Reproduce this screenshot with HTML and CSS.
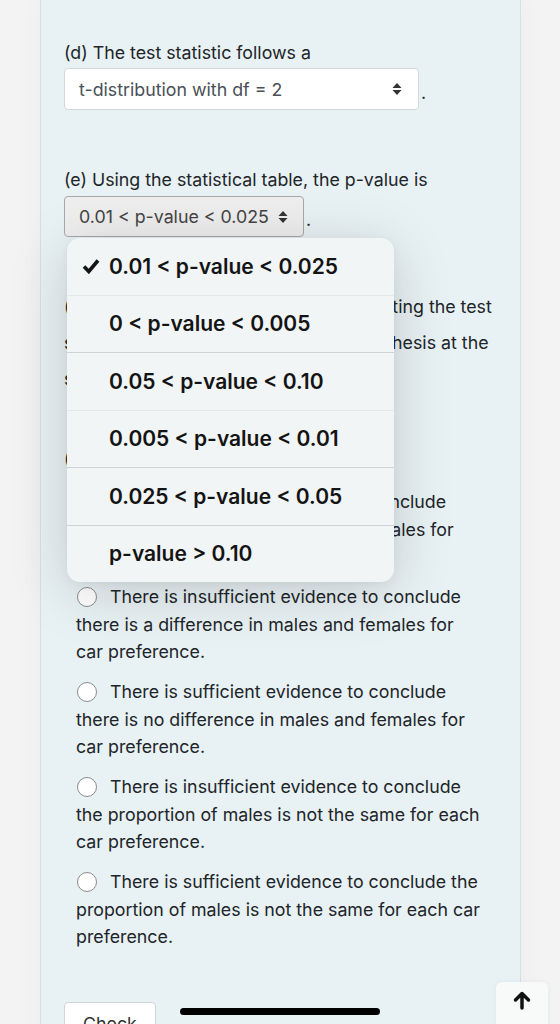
FILE: index.html
```html
<!DOCTYPE html>
<html lang="en">
<head>
<meta charset="utf-8">
<title>Question</title>
<link rel="stylesheet" href="styles.css">
</head>
<body>
<div class="page">
  <div class="card">
    <div class="part">
      <div class="label">(d) The test statistic follows a</div>
      <div class="answer-row">
        <div class="select select-d">
          <span>t-distribution with df = 2</span>
          <svg class="arrows" width="10" height="14" viewBox="0 0 10 14"><polygon points="0.5,6 5,1 9.5,6"/><polygon points="0.5,8 5,13 9.5,8"/></svg>
        </div>
        <span class="dot">.</span>
      </div>
    </div>

    <div class="part part-e">
      <div class="label">(e) Using the statistical table, the p-value is</div>
      <div class="answer-row">
        <div class="select-wrap">
          <div class="select select-e">
            <span>0.01 &lt; p-value &lt; 0.025</span>
            <svg class="arrows" width="10" height="14" viewBox="0 0 10 14"><polygon points="0.5,6 5,1 9.5,6"/><polygon points="0.5,8 5,13 9.5,8"/></svg>
          </div>
          <div class="menu">
            <div class="menu-item">
              <svg class="check" width="18" height="16" viewBox="0 0 18 16"><path d="M2 8.5 L6.8 13.5 L16 2.5"/></svg>
              0.01 &lt; p-value &lt; 0.025
            </div>
            <div class="menu-item sep-light">0 &lt; p-value &lt; 0.005</div>
            <div class="menu-item">0.05 &lt; p-value &lt; 0.10</div>
            <div class="menu-item sep-light">0.005 &lt; p-value &lt; 0.01</div>
            <div class="menu-item">0.025 &lt; p-value &lt; 0.05</div>
            <div class="menu-item">p-value &gt; 0.10</div>
          </div>
        </div>
        <span class="dot">.</span>
      </div>
    </div>

    <p class="part-f">(f) The exact decision made by conducting the test<br>statistic is that you reject the null hypothesis at the<br>significance level of 0.05.</p>

    <p class="part-g">(g) The conclusion of the test is .</p>

    <div class="options">
      <div class="option"><span class="radio"></span>There is sufficient evidence to conclude there is a difference in males and females for car preference.</div>
      <div class="option"><span class="radio"></span>There is insufficient evidence to conclude there is a difference in males and females for car preference.</div>
      <div class="option"><span class="radio"></span>There is sufficient evidence to conclude there is no difference in males and females for car preference.</div>
      <div class="option"><span class="radio"></span>There is insufficient evidence to conclude the proportion of males is not the same for each car preference.</div>
      <div class="option"><span class="radio"></span>There is sufficient evidence to conclude the proportion of males is not the same for each car preference.</div>
    </div>

    <button class="check-btn" type="button">Check</button>
  </div>

  <div class="home-bar"></div>
  <button class="to-top" type="button" aria-label="Back to top">
    <svg width="20" height="20" viewBox="0 0 20 20"><path d="M10 18 V4 M3.5 10 L10 3.5 L16.5 10"/></svg>
  </button>
</div>
</body>
</html>
```

FILE: styles.css
```css
html, body {
  margin: 0;
  padding: 0;
}

body {
  background: #f3f3f3;
  font-family: Inter, "Noto Sans", sans-serif;
  color: #212529;
}

.page {
  position: relative;
  width: 560px;
  height: 1024px;
  overflow: hidden;
}

.card {
  margin-left: 40px;
  width: 481px;
  min-height: 1100px;
  box-sizing: border-box;
  padding: 41px 23px 0;
  background: #e8f1f4;
  border-left: 1px solid #d2e1e8;
  border-right: 1px solid #d2e1e8;
  box-shadow: 0 0 24px rgba(0, 0, 0, 0.03);
}

.label {
  font-size: 17.8px;
  line-height: 24px;
}

.part-e {
  margin-top: 58px;
}

.answer-row {
  display: flex;
  align-items: center;
  gap: 2px;
  margin-top: 3px;
}

.part-e .answer-row {
  margin-top: 4px;
}

.dot {
  font-size: 17.8px;
  padding-top: 6px;
}

.select {
  display: flex;
  align-items: center;
  justify-content: space-between;
  box-sizing: border-box;
  border-radius: 4px;
  font-size: 17.8px;
  color: #495057;
}

.select-d {
  width: 355px;
  height: 42px;
  padding: 0 16px 0 14px;
  background: #ffffff;
  border: 1px solid #d2d7db;
}

.select-wrap {
  position: relative;
}

.select-e {
  width: 240px;
  height: 41px;
  padding: 0 15px 0 14px;
  background: #eeeeee;
  border: 1px solid #a8a8a8;
  color: #444;
}

.arrows {
  fill: #333;
}

.menu {
  position: absolute;
  top: calc(100% + 1px);
  left: 3px;
  z-index: 5;
  width: 327px;
  height: 344px;
  display: flex;
  flex-direction: column;
  border-radius: 13px;
  overflow: hidden;
  background: #f1f5f6;
  box-shadow: 0 10px 60px rgba(0, 0, 0, 0.16), 0 2px 10px rgba(0, 0, 0, 0.05);
}

.menu-item {
  position: relative;
  flex: 1;
  display: flex;
  align-items: center;
  padding-left: 42px;
  font-size: 21px;
  font-weight: 600;
  color: #141414;
  border-top: 1px solid #cfd3d5;
}

.menu-item:first-child {
  border-top: 0;
}

.menu-item.sep-light {
  border-top-color: #e4e8e9;
}

.check {
  position: absolute;
  left: 15px;
  top: 50%;
  margin-top: -8px;
  fill: none;
  stroke: #141414;
  stroke-width: 3.6;
}

.part-f {
  margin: 52px 0 0;
  font-size: 17.8px;
  line-height: 36px;
  white-space: nowrap;
}

.part-g {
  margin: 48px 0 0;
  font-size: 17.8px;
  line-height: 28px;
}

.options {
  margin: 15px 12px 0;
}

.option {
  font-size: 17.8px;
  line-height: 27.5px;
  margin-bottom: 12.5px;
}

.radio {
  display: inline-block;
  box-sizing: border-box;
  width: 20px;
  height: 20px;
  margin: 0 13px 0 1px;
  border: 1.5px solid #8b8b8b;
  border-radius: 50%;
  background: #fff;
  vertical-align: -4px;
}

.check-btn {
  display: block;
  margin-top: 51px;
  width: 92px;
  height: 44px;
  box-sizing: border-box;
  background: #fff;
  border: 1px solid #cfd4d8;
  border-radius: 4px;
  font-family: Inter, "Noto Sans", sans-serif;
  font-size: 17.8px;
  color: #333;
}

.home-bar {
  position: absolute;
  left: 180px;
  bottom: 9px;
  width: 200px;
  height: 7px;
  border-radius: 4px;
  background: #000;
}

.to-top {
  position: absolute;
  left: 496px;
  top: 982px;
  width: 52px;
  height: 60px;
  padding: 0 0 22px;
  border: 0;
  border-radius: 6px;
  background: #f8f9f9;
  box-shadow: 0 0 6px rgba(0, 0, 0, 0.05);
}

.to-top svg {
  fill: none;
  stroke: #111;
  stroke-width: 3.5;
  stroke-linecap: round;
  stroke-linejoin: round;
}
```
